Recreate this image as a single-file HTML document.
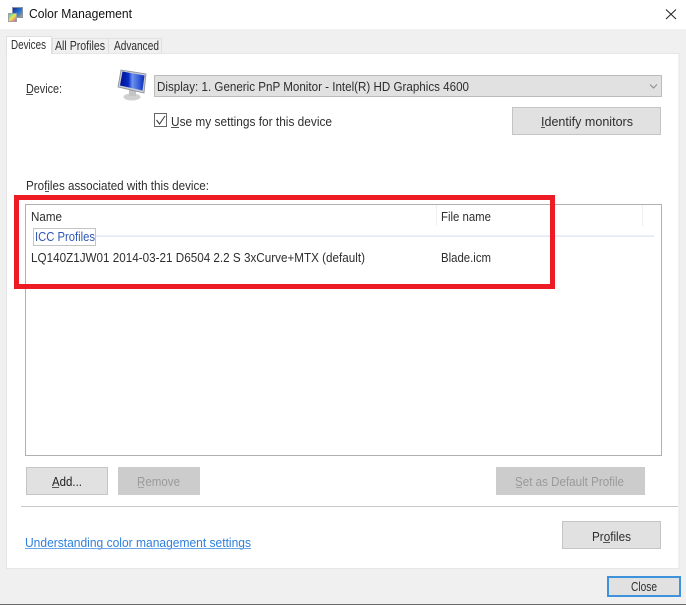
<!DOCTYPE html>
<html>
<head>
<meta charset="utf-8">
<title>Color Management</title>
<style>
html,body{margin:0;padding:0;width:686px;height:605px;overflow:hidden;background:#fff}
svg{display:block}
text{font-family:"Liberation Sans",sans-serif;font-size:12.5px;fill:#2e2e2e;filter:blur(.3px)}
</style>
</head>
<body>
<svg width="686" height="605" viewBox="0 0 686 605" xmlns="http://www.w3.org/2000/svg">
<defs>
<linearGradient id="scr" x1="0" y1="0" x2="1" y2="0"><stop offset="0" stop-color="#00118c"/><stop offset=".35" stop-color="#0a2cc8"/><stop offset=".5" stop-color="#6f92ea"/><stop offset=".75" stop-color="#3a62dc"/><stop offset="1" stop-color="#0a2cb8"/></linearGradient>
<linearGradient id="ic" x1="0" y1="0" x2="1" y2="1"><stop offset="0" stop-color="#1fc7e0"/><stop offset=".5" stop-color="#e8e84a"/><stop offset="1" stop-color="#e53aa8"/></linearGradient>
<linearGradient id="ic2" x1="0" y1="0" x2="1" y2="1"><stop offset="0" stop-color="#14208c"/><stop offset=".6" stop-color="#2c80d8"/><stop offset="1" stop-color="#e8a040"/></linearGradient>
</defs>

<!-- window -->
<rect x="0" y="0" width="686" height="605" fill="#f0f0f0"/>
<rect x="0" y="0" width="686" height="29" fill="#fff"/>
<rect x="0" y="604" width="686" height="1" fill="#6a6a6a"/>

<!-- title icon -->
<rect x="12.5" y="7.5" width="10" height="10" fill="url(#ic2)" stroke="#8a94a8"/>
<rect x="8.5" y="13.5" width="8" height="8" fill="url(#ic)" stroke="#a0a0a0"/>
<text x="29" y="18" textLength="103" lengthAdjust="spacingAndGlyphs" style="font-size:13px;fill:#111">Color Management</text>
<path d="M666 9.5 L676 19 M676 9.5 L666 19" stroke="#222" stroke-width="1" fill="none"/>

<!-- panel and tabs -->
<rect x="6.5" y="53.5" width="672.5" height="515" fill="#fff" stroke="#e6e6e6"/>
<path d="M52.5 53V38.5H108.5V53" fill="#f0f0f0" stroke="#e0e0e0"/>
<path d="M108.5 53V38.5H161.5V53" fill="#f0f0f0" stroke="#e0e0e0"/>
<path d="M6.5 54V36.5H51.5V54" fill="#fff" stroke="#e0e0e0"/>
<rect x="7" y="52" width="44" height="3" fill="#fff"/>
<text x="11" y="49" textLength="35" lengthAdjust="spacingAndGlyphs">Devices</text>
<text x="55" y="50" textLength="50" lengthAdjust="spacingAndGlyphs">All Profiles</text>
<text x="114" y="50" textLength="45" lengthAdjust="spacingAndGlyphs">Advanced</text>

<!-- device row -->
<text x="26" y="93" textLength="36" lengthAdjust="spacingAndGlyphs">Device:</text>
<rect x="26" y="94" width="7" height="1" fill="#555"/>

<!-- monitor icon -->
<ellipse cx="132" cy="97" rx="8.5" ry="3.5" fill="#d0d0d0"/>
<rect x="129" y="90" width="7" height="6" fill="#c4c4c4"/>
<path d="M121 70 L146 74 L144 93 L118 87 Z" fill="#c8ccd4" stroke="#8a8f9a" stroke-width=".8"/>
<path d="M122.5 71.5 L144.5 75.5 L142.5 90.5 L120 85.5 Z" fill="url(#scr)"/>

<!-- combo -->
<rect x="154.5" y="75.5" width="507" height="21" fill="#e1e1e1" stroke="#bcbcbc"/>
<text x="157" y="91" textLength="312" lengthAdjust="spacingAndGlyphs">Display: 1. Generic PnP Monitor - Intel(R) HD Graphics 4600</text>
<path d="M650 84.5 L653.5 88 L657 84.5" fill="none" stroke="#8a8a8a" stroke-width="1"/>

<!-- checkbox -->
<rect x="154.5" y="113.5" width="12" height="13" fill="#fff" stroke="#666"/>
<path d="M156.5 120 L159.5 124 L165 116" fill="none" stroke="#444" stroke-width="1.1"/>
<text x="171" y="126" textLength="161" lengthAdjust="spacingAndGlyphs">Use my settings for this device</text>
<rect x="171" y="127" width="8" height="1" fill="#555"/>

<!-- identify -->
<rect x="512.5" y="107.5" width="148" height="27" fill="#e1e1e1" stroke="#c4c4c4"/>
<text x="541" y="126" textLength="92" lengthAdjust="spacingAndGlyphs">Identify monitors</text>
<rect x="541" y="127" width="4" height="1" fill="#555"/>

<!-- list -->
<text x="26" y="190" textLength="183" lengthAdjust="spacingAndGlyphs">Profiles associated with this device:</text>
<rect x="45" y="191" width="4" height="1" fill="#555"/>
<rect x="25.5" y="204.5" width="636" height="251" fill="#fff" stroke="#b0b0b0"/>
<text x="31" y="221" textLength="31" lengthAdjust="spacingAndGlyphs">Name</text>
<text x="441" y="221" textLength="50" lengthAdjust="spacingAndGlyphs">File name</text>
<rect x="436" y="205" width="1" height="21" fill="#f0f0f0"/>
<rect x="642" y="205" width="1" height="21" fill="#f0f0f0"/>
<rect x="96" y="235.5" width="558" height="1.2" fill="#dde2f2"/>
<rect x="33.5" y="228.5" width="62" height="17" fill="#fff" stroke="#8a8a8a" stroke-dasharray="1 1"/>
<text x="35" y="241" textLength="60" lengthAdjust="spacingAndGlyphs" style="fill:#2f55b5">ICC Profiles</text>
<text x="31" y="262" textLength="334" lengthAdjust="spacingAndGlyphs">LQ140Z1JW01 2014-03-21 D6504 2.2 S 3xCurve+MTX (default)</text>
<text x="441" y="262" textLength="50" lengthAdjust="spacingAndGlyphs">Blade.icm</text>

<!-- red annotation -->
<rect x="16.5" y="197.5" width="536" height="89" fill="none" stroke="#ed1c24" stroke-width="5"/>

<!-- buttons -->
<rect x="26.5" y="467.5" width="81" height="27" fill="#e1e1e1" stroke="#c4c4c4"/>
<text x="52" y="486" textLength="30" lengthAdjust="spacingAndGlyphs" style="fill:#222">Add...</text>
<rect x="52" y="487" width="7" height="1" fill="#555"/>
<rect x="118" y="467" width="82" height="28" fill="#cccccc"/>
<text x="137" y="486" textLength="43" lengthAdjust="spacingAndGlyphs" style="fill:#9a9a9a">Remove</text>
<rect x="138" y="487" width="6" height="1" fill="#a5a5a5"/>
<rect x="496" y="467" width="149" height="28" fill="#cccccc"/>
<text x="515" y="486" textLength="109" lengthAdjust="spacingAndGlyphs" style="fill:#9a9a9a">Set as Default Profile</text>
<rect x="516" y="487" width="6" height="1" fill="#a5a5a5"/>

<rect x="21" y="506" width="657" height="1" fill="#c8c8c8"/>

<text x="25" y="547" textLength="226" lengthAdjust="spacingAndGlyphs" style="fill:#2f80dc">Understanding color management settings</text>
<rect x="25" y="548" width="226" height="1" fill="#6aa8ea"/>

<rect x="562.5" y="521.5" width="98" height="27" fill="#e1e1e1" stroke="#c4c4c4"/>
<text x="592" y="541" textLength="39" lengthAdjust="spacingAndGlyphs">Profiles</text>
<rect x="603" y="542" width="7" height="1" fill="#555"/>

<rect x="608" y="577" width="72" height="19" fill="#e1e1e1" stroke="#3f93dc" stroke-width="2"/>
<text x="631" y="591" textLength="26" lengthAdjust="spacingAndGlyphs">Close</text>
</svg>
</body>
</html>
